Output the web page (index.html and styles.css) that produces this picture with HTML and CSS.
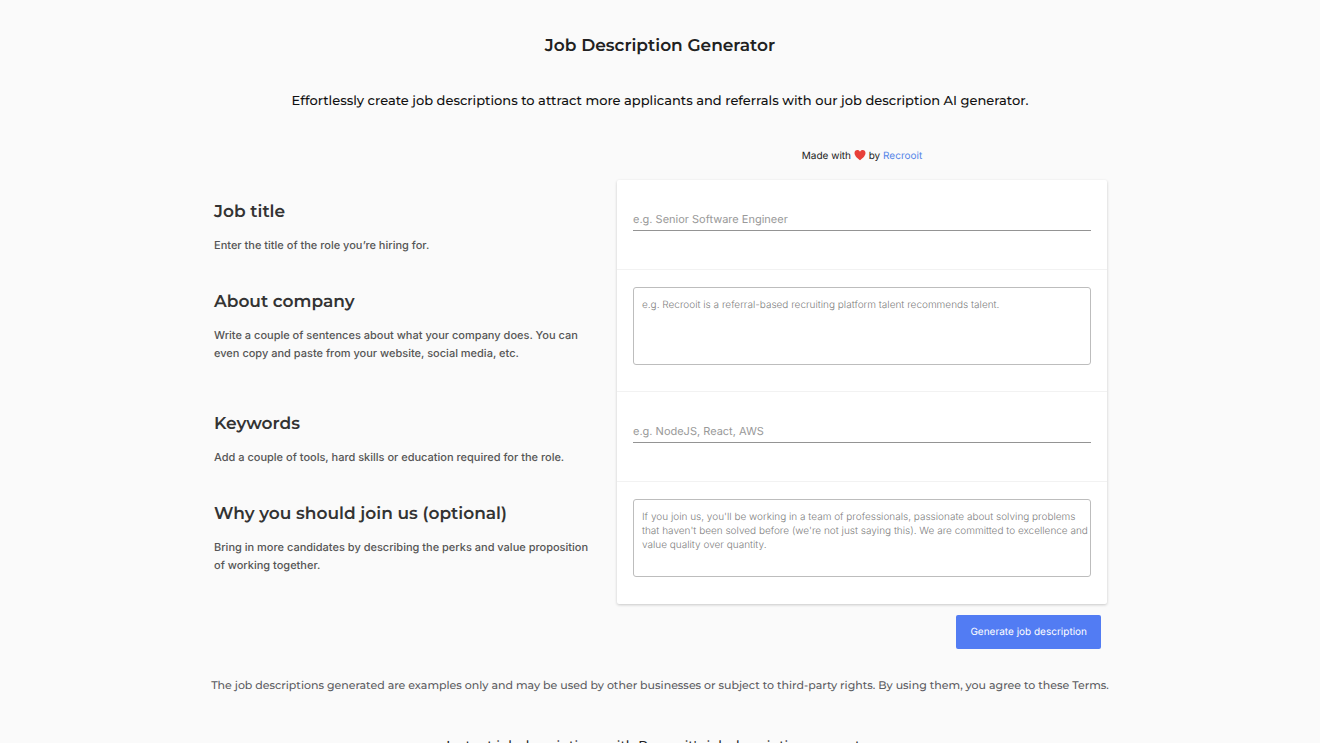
FILE: index.html
```
<!DOCTYPE html>
<html lang="en">
<head>
<meta charset="utf-8">
<meta name="viewport" content="width=device-width, initial-scale=1">
<title>Job Description Generator</title>
<link rel="stylesheet" href="styles.css">
</head>
<body>
<main class="page">
  <h1 class="title">Job Description Generator</h1>
  <p class="tagline">Effortlessly create job descriptions to attract more applicants and referrals with our job description AI generator.</p>
  <form class="form">
    <div class="guide">
      <div class="row">
        <label class="heading" for="job">Job title</label>
        <p class="hint">Enter the title of the role you’re hiring for.</p>
      </div>
      <div class="row row-tall">
        <label class="heading" for="company">About company</label>
        <p class="hint">Write a couple of sentences about what your company does. You can even copy and paste from your website, social media, etc.</p>
      </div>
      <div class="row">
        <label class="heading" for="keywords">Keywords</label>
        <p class="hint">Add a couple of tools, hard skills or education required for the role.</p>
      </div>
      <div class="row row-tall">
        <label class="heading" for="why">Why you should join us (optional)</label>
        <p class="hint">Bring in more candidates by describing the perks and value proposition of working together.</p>
      </div>
    </div>
    <div class="entry">
      <p class="credit">Made with
        <svg class="heart" viewBox="0 0 24 24" role="img" aria-label="love"><path fill="#e8403a" d="M12 22.500C9 20 1 14.500 1 8C1 4.500 3.500 2 6.700 2C9 2 11 3.300 12 5.300C13 3.300 15 2 17.300 2C20.500 2 23 4.500 23 8C23 14.500 15 20 12 22.500Z"/></svg>
        by <a class="link" href="#">Recrooit</a></p>
      <div class="card">
        <div class="row"><input class="line" id="job" type="text" placeholder="e.g. Senior Software Engineer"></div>
        <div class="row row-tall"><textarea class="box" id="company" placeholder="e.g. Recrooit is a referral-based recruiting platform talent recommends talent."></textarea></div>
        <div class="row"><input class="line" id="keywords" type="text" placeholder="e.g. NodeJS, React, AWS"></div>
        <div class="row row-tall"><textarea class="box" id="why" placeholder="If you join us, you'll be working in a team of professionals, passionate about solving problems that haven't been solved before (we're not just saying this). We are committed to excellence and value quality over quantity."></textarea></div>
      </div>
      <button class="submit" type="button">Generate job description</button>
    </div>
  </form>
  <p class="terms">The job descriptions generated are examples only and may be used by other businesses or subject to third-party rights. By using them, you agree to these Terms.</p>
  <h2 class="more">Instant job descriptions with Recrooit's job description generator</h2>
</main>
</body>
</html>
```
FILE: styles.css
```
* { box-sizing: border-box; }
body {
  margin: 0;
  background: #fafafa;
  color: #212121;
  font-family: Inter, "Liberation Sans", sans-serif;
  text-rendering: geometricPrecision;
}
h1, h2, p { margin: 0; }
.page {
  padding: 34px 16px 24px;
}
.title, .tagline, .heading, .terms, .more {
  font-family: Montserrat, Inter, sans-serif;
}
.title {
  font-size: 17px;
  line-height: 24px;
  font-weight: 600;
  text-align: center;
}
.tagline {
  margin-top: 33px;
  color: #111;
  font-size: 13px;
  line-height: 20px;
  font-weight: 500;
  text-align: center;
}
.form {
  display: grid;
  grid-template-columns: 404fr 490fr;
  max-width: 894px;
  margin: 37px auto 0;
}
.guide { padding: 33px 24px 0 1px; }
.guide .row { padding-top: 19px; }
.row { min-height: 90px; }
.row-tall { min-height: 122px; }
.heading {
  display: block;
  color: #333;
  font-size: 17px;
  line-height: 24px;
  font-weight: 600;
}
.hint {
  margin-top: 12px;
  color: #555;
  font-size: 11px;
  line-height: 18px;
  font-weight: 500;
}
.entry {
  display: flex;
  flex-direction: column;
}
.credit {
  font-size: 10px;
  line-height: 16px;
  text-align: center;
}
.heart {
  width: 12px;
  height: 12px;
  vertical-align: -2px;
}
.link {
  color: #5484e8;
  text-decoration: none;
}
.card {
  margin-top: 16px;
  border-radius: 2px;
  background: #fff;
  box-shadow: 0 1px 3px rgba(0, 0, 0, 0.2);
}
.card .row {
  padding: 17px 16px;
  border-bottom: 1px solid #f2f2f2;
}
.card .row:last-child { border-bottom: 0; }
.line, .box {
  display: block;
  width: 100%;
  color: #333;
  font-family: inherit;
  text-rendering: inherit;
  background: transparent;
  outline: none;
}
.line {
  height: 34px;
  padding: 10px 0 0;
  border: 0;
  border-bottom: 1px solid #949494;
  font-size: 11px;
}
.box {
  height: 78px;
  padding: 10px 0 9px 8px;
  border: 1px solid #bdbdbd;
  border-radius: 3px;
  font-size: 10px;
  line-height: 14px;
  font-weight: 300;
  resize: none;
}
.line::placeholder, .box::placeholder {
  color: #999;
  opacity: 1;
}
.box::placeholder { color: #808080; }
.submit {
  align-self: flex-end;
  height: 34px;
  margin: 11px 6px 0 0;
  padding: 0 14px;
  border: 0;
  border-radius: 2px;
  background: #527cf3;
  color: #fff;
  font-family: inherit;
  font-size: 10px;
  text-rendering: inherit;
}
.terms {
  margin-top: 26px;
  color: #5c5c61;
  font-size: 11px;
  line-height: 20px;
  font-weight: 500;
  text-align: center;
}
.more {
  margin-top: 41px;
  font-size: 13px;
  line-height: 20px;
  font-weight: 500;
  text-align: center;
}
```
